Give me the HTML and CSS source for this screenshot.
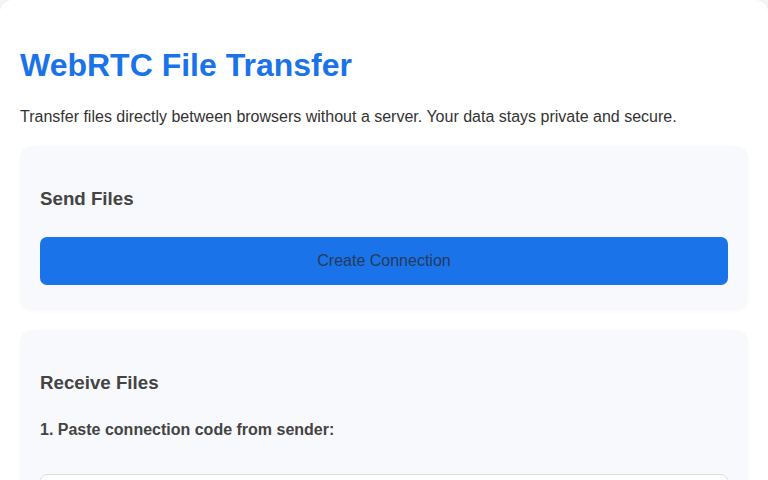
FILE: index.html
```html
<!DOCTYPE html>
<html lang="en">
<head>
<meta charset="utf-8">
<title>WebRTC File Transfer</title>
<link rel="stylesheet" href="styles.css">
</head>
<body>
<div class="container">
  <h1 class="title">WebRTC File Transfer</h1>
  <p class="intro">Transfer files directly between browsers without a server. Your data stays private and secure.</p>

  <section class="card">
    <h3 class="card-title">Send Files</h3>
    <button class="btn">Create Connection</button>
  </section>

  <section class="card">
    <h3 class="card-title">Receive Files</h3>
    <p class="step">1. Paste connection code from sender:</p>
    <textarea class="code-input" rows="4"></textarea>
  </section>
</div>
</body>
</html>
```
FILE: styles.css
```css
html, body {
  margin: 0;
  padding: 0;
}
body {
  background: #f4f5f7;
  font-family: "Liberation Sans", Arial, sans-serif;
  color: #333;
}
.container {
  background: #ffffff;
  border-radius: 12px;
  padding: 26px 20px 20px;
  box-shadow: 0 2px 10px rgba(0, 0, 0, 0.06);
  min-height: 600px;
}
.title {
  font-size: 32px;
  font-weight: bold;
  color: #1a73e8;
  margin: 21px 0 24px;
}
.intro {
  font-size: 16px;
  color: #333;
  margin: 0 0 20px;
}
.card {
  background: #f8f9fc;
  border-radius: 12px;
  padding: 25px 20px;
  margin-bottom: 20px;
  box-shadow: 0 1px 4px rgba(0, 0, 0, 0.03);
}
.card-title {
  font-size: 18.72px;
  font-weight: bold;
  color: #444;
  margin: 17px 0 27px;
}
.btn {
  display: block;
  width: 100%;
  height: 48px;
  border: none;
  border-radius: 7px;
  background: #1a73e8;
  color: #263a5c;
  font-family: "Liberation Sans", Arial, sans-serif;
  font-size: 16px;
}
.step {
  font-size: 16px;
  font-weight: bold;
  color: #444;
  margin: 0 0 35px;
}
.code-input {
  display: block;
  box-sizing: border-box;
  width: 100%;
  height: 90px;
  border: 1px solid #dddddd;
  border-radius: 7px;
  background: #ffffff;
  margin: 0;
  resize: none;
}
```
